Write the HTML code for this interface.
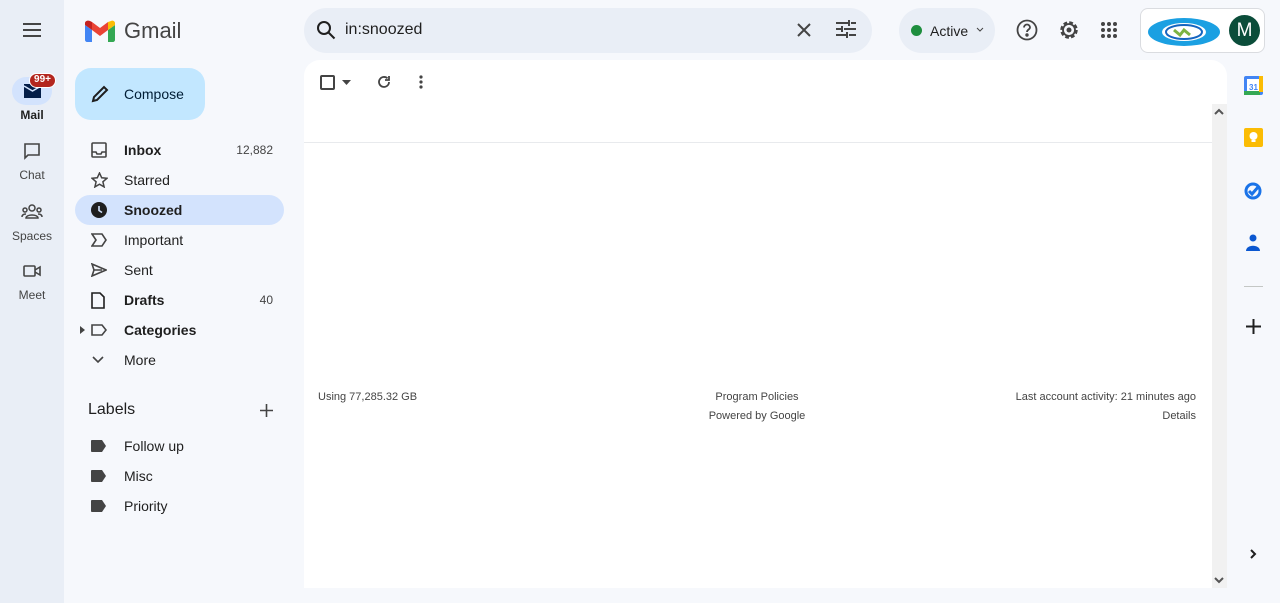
<!DOCTYPE html>
<html><head><meta charset="utf-8"><style>
*{box-sizing:border-box;margin:0;padding:0}
body{width:1280px;height:603px;background:#f6f8fc;font-family:"Liberation Sans",Arial,sans-serif;color:#1f1f1f;position:relative;overflow:hidden}
.rail{position:absolute;left:0;top:0;width:64px;height:603px;background:#e9eef6}
.abs{position:absolute}
.nav{position:absolute;left:75px;width:209px;height:30px;border-radius:15px;font-size:14px;display:flex;align-items:center}
.nav .t{position:absolute;left:49px}
.nav .c{position:absolute;right:11px;font-size:12px;color:#444}
.nav svg{position:absolute;left:16px}
.b{font-weight:bold}
.rl{font-size:12px;color:#444;text-align:center;width:64px;position:absolute;left:0}
.ft{font-size:11px;color:#444;position:absolute;line-height:19px}
</style></head><body>
<div class="rail"></div>
<svg class="abs" style="left:22px;top:21px" width="20" height="18"><path d="M1 3h18M1 9h18M1 15h18" stroke="#444" stroke-width="2"/></svg>
<div class="abs" style="left:12px;top:77px;width:40px;height:28px;border-radius:14px;background:#d3e3fd"></div>
<svg class="abs" style="left:24px;top:84px" width="17" height="14"><path d="M0 0h17v14H0z" fill="#041e49"/><path d="M0 2l8.5 5L17 2" stroke="#d3e3fd" stroke-width="1.5" fill="none"/></svg>
<div class="abs" style="left:29px;top:73px;width:27px;height:15px;border-radius:8px;background:#b3261e;border:1.5px solid #fff;color:#fff;font-size:10px;font-weight:bold;text-align:center;line-height:12px">99+</div>
<div class="rl b" style="top:108px;color:#1f1f1f">Mail</div>
<svg class="abs" style="left:23px;top:142px" width="18" height="18"><path d="M2 2h14v11H5l-3 3z" fill="none" stroke="#444" stroke-width="1.6"/></svg>
<div class="rl" style="top:168px">Chat</div>
<svg class="abs" style="left:21px;top:203px" width="22" height="16" fill="none" stroke="#444" stroke-width="1.5"><circle cx="11" cy="5" r="3"/><circle cx="4" cy="7" r="2"/><circle cx="18" cy="7" r="2"/><path d="M5 15c0-4 12-4 12 0zM1 14c0-3 3-3 4-3M21 14c0-3-3-3-4-3"/></svg>
<div class="rl" style="top:229px">Spaces</div>
<svg class="abs" style="left:23px;top:264px" width="18" height="14" fill="none" stroke="#444" stroke-width="1.6"><rect x="1" y="2" width="11" height="10" rx="1"/><path d="M12 6l5-3v8l-5-3"/></svg>
<div class="rl" style="top:288px">Meet</div>

<svg class="abs" style="left:85px;top:20px" width="30" height="22" viewBox="0 0 30 22"><path d="M2 22h5V10L0 5v15c0 1 1 2 2 2z" fill="#4285f4"/><path d="M23 22h5c1 0 2-1 2-2V5l-7 5z" fill="#34a853"/><path d="M23 2v8l7-5V3c0-2-3-3-4-2z" fill="#fbbc04"/><path d="M7 10V2l8 6 8-6v8l-8 6z" fill="#ea4335"/><path d="M0 3v2l7 5V2L5 1C3 0 0 1 0 3z" fill="#c5221f"/></svg>
<div class="abs" style="left:124px;top:18px;font-size:22px;color:#444">Gmail</div>

<div class="abs" style="left:75px;top:68px;width:130px;height:52px;border-radius:16px;background:#c2e7ff"></div>
<svg class="abs" style="left:90px;top:84px" width="20" height="20"><path d="M3 17l1-4L14 3l3 3L7 16z" fill="none" stroke="#1f1f1f" stroke-width="2"/></svg>
<div class="abs" style="left:124px;top:86px;font-size:14px;color:#001d35">Compose</div>

<div class="nav" style="top:135px"><svg width="16" height="16" fill="none" stroke="#444" stroke-width="1.6"><rect x="1" y="1" width="14" height="14" rx="1"/><path d="M1 10h4l1 2h4l1-2h4"/></svg><span class="t b">Inbox</span><span class="c">12,882</span></div>
<div class="nav" style="top:165px"><svg width="17" height="16" fill="none" stroke="#444" stroke-width="1.5"><path d="M8.5 1l2.2 4.8 5.2.5-4 3.5 1.2 5.1-4.6-2.7-4.6 2.7 1.2-5.1-4-3.5 5.2-.5z"/></svg><span class="t">Starred</span></div>
<div class="nav" style="top:195px;background:#d3e3fd"><svg width="16" height="16"><circle cx="8" cy="8" r="8" fill="#1f1f1f"/><path d="M8 4v4.5l3 2" stroke="#d3e3fd" stroke-width="1.6" fill="none"/></svg><span class="t b">Snoozed</span></div>
<div class="nav" style="top:225px"><svg width="16" height="14" fill="none" stroke="#444" stroke-width="1.6"><path d="M1 1h10l4 6-4 6H1l4-6z"/></svg><span class="t">Important</span></div>
<div class="nav" style="top:255px"><svg width="16" height="14" fill="none" stroke="#444" stroke-width="1.6"><path d="M1 1l14 6-14 6 2-6zM3 7h8"/></svg><span class="t">Sent</span></div>
<div class="nav" style="top:285px"><svg width="14" height="17" fill="none" stroke="#1f1f1f" stroke-width="1.6"><path d="M1 1h8l4 4v11H1z"/></svg><span class="t b">Drafts</span><span class="c">40</span></div>
<div class="nav" style="top:315px"><svg style="left:5px" width="5" height="8"><path d="M0 0l5 4-5 4z" fill="#444"/></svg><svg width="16" height="12" fill="none" stroke="#444" stroke-width="1.6"><path d="M1 1h10l4 5-4 5H1z"/></svg><span class="t b">Categories</span></div>
<div class="nav" style="top:345px"><svg width="14" height="10" fill="none" stroke="#444" stroke-width="1.6"><path d="M2 2l5 5 5-5"/></svg><span class="t">More</span></div>

<div class="abs" style="left:88px;top:401px;font-size:16px">Labels</div>
<svg class="abs" style="left:259px;top:403px" width="15" height="15"><path d="M7.5 1v13M1 7.5h13" stroke="#444" stroke-width="1.6"/></svg>
<div class="nav" style="top:431px"><svg width="16" height="12"><path d="M0 1c0-1 1-1 1-1h10l4 6-4 6H1c-1 0-1-1-1-1z" fill="#444"/></svg><span class="t">Follow up</span></div>
<div class="nav" style="top:461px"><svg width="16" height="12"><path d="M0 1c0-1 1-1 1-1h10l4 6-4 6H1c-1 0-1-1-1-1z" fill="#444"/></svg><span class="t">Misc</span></div>
<div class="nav" style="top:491px"><svg width="16" height="12"><path d="M0 1c0-1 1-1 1-1h10l4 6-4 6H1c-1 0-1-1-1-1z" fill="#444"/></svg><span class="t">Priority</span></div>

<div class="abs" style="left:304px;top:8px;width:568px;height:45px;border-radius:23px;background:#e9eef6"></div>
<svg class="abs" style="left:316px;top:20px" width="20" height="20" fill="none" stroke="#1f1f1f" stroke-width="2"><circle cx="8" cy="8" r="6"/><path d="M12.5 12.5l6 6"/></svg>
<div class="abs" style="left:345px;top:21px;font-size:16px">in:snoozed</div>
<svg class="abs" style="left:796px;top:22px" width="16" height="16"><path d="M2 2l12 12M14 2L2 14" stroke="#444" stroke-width="2"/></svg>
<svg class="abs" style="left:836px;top:20px" width="20" height="18" stroke="#444" stroke-width="2"><path d="M0 3h12M15 3h5M0 9h5M8 9h12M0 15h10M13 15h7M13 0v6M6 6v6M11 12v6"/></svg>

<div class="abs" style="left:899px;top:8px;width:96px;height:45px;border-radius:23px;background:#e9eef6"></div>
<div class="abs" style="left:911px;top:25px;width:11px;height:11px;border-radius:50%;background:#1e8e3e"></div>
<div class="abs" style="left:930px;top:23px;font-size:14px;color:#1f1f1f">Active</div>
<svg class="abs" style="left:976px;top:27px" width="8" height="5"><path d="M1 1l3 3 3-3" stroke="#444" fill="none"/></svg>
<svg class="abs" style="left:1016px;top:19px" width="22" height="22" fill="none" stroke="#444" stroke-width="1.8"><circle cx="11" cy="11" r="9.5"/><path d="M8 8.5a3 3 0 116 0c0 2-3 2-3 4.5"/><circle cx="11" cy="16" r=".8" fill="#444"/></svg>
<svg class="abs" style="left:1058px;top:19px" width="22" height="22"><circle cx="11" cy="11" r="7" fill="none" stroke="#444" stroke-width="3.5" stroke-dasharray="3.5 2"/><circle cx="11" cy="11" r="6" fill="none" stroke="#444" stroke-width="1.8"/><circle cx="11" cy="11" r="2.5" fill="#444"/></svg>
<svg class="abs" style="left:1101px;top:22px" width="16" height="16" fill="#444"><circle cx="2" cy="2" r="2"/><circle cx="8" cy="2" r="2"/><circle cx="14" cy="2" r="2"/><circle cx="2" cy="8" r="2"/><circle cx="8" cy="8" r="2"/><circle cx="14" cy="8" r="2"/><circle cx="2" cy="14" r="2"/><circle cx="8" cy="14" r="2"/><circle cx="14" cy="14" r="2"/></svg>
<div class="abs" style="left:1140px;top:8px;width:125px;height:45px;border-radius:8px;background:#fff;border:1px solid #dadce0"></div>
<svg class="abs" style="left:1147px;top:17px" width="74" height="30"><ellipse cx="37" cy="15" rx="36" ry="14" fill="#1ba0e2"/><ellipse cx="37" cy="15" rx="22" ry="9" fill="#fff"/><ellipse cx="37" cy="15" rx="18" ry="7" fill="none" stroke="#1565c0" stroke-width="2"/><path d="M27 13l6 5 4-5 6 5" stroke="#7cb342" stroke-width="3" fill="none"/></svg>
<div class="abs" style="left:1229px;top:15px;width:31px;height:31px;border-radius:50%;background:#0b4d3a;color:#fff;font-size:19px;text-align:center;line-height:31px">M</div>

<div class="abs" style="left:304px;top:60px;width:923px;height:528px;border-radius:16px 16px 0 0;background:#fff"></div>
<div class="abs" style="left:1212px;top:104px;width:15px;height:484px;background:#f1f1f1"></div>
<svg class="abs" style="left:1214px;top:108px" width="10" height="8"><path d="M1 6l4-4 4 4" stroke="#555" stroke-width="2" fill="none"/></svg>
<svg class="abs" style="left:1214px;top:576px" width="10" height="8"><path d="M1 2l4 4 4-4" stroke="#555" stroke-width="2" fill="none"/></svg>
<div class="abs" style="left:304px;top:142px;width:908px;height:1px;background:#e8eaed"></div>
<div class="abs" style="left:320px;top:75px;width:15px;height:15px;border:2px solid #444;border-radius:2px"></div>
<svg class="abs" style="left:342px;top:80px" width="9" height="5"><path d="M0 0h9L4.5 5z" fill="#444"/></svg>
<svg class="abs" style="left:376px;top:74px" width="16" height="16" fill="none" stroke="#444" stroke-width="1.8"><path d="M13 8a5 5 0 11-1.5-3.6"/><path d="M13 2v4H9" /></svg>
<svg class="abs" style="left:419px;top:75px" width="4" height="14" fill="#444"><circle cx="2" cy="2" r="1.6"/><circle cx="2" cy="7" r="1.6"/><circle cx="2" cy="12" r="1.6"/></svg>

<div class="ft" style="left:318px;top:388px">Using 77,285.32 GB</div>
<div class="ft" style="left:697px;width:120px;text-align:center;top:388px">Program Policies<br>Powered by Google</div>
<div class="ft" style="right:84px;text-align:right;top:388px">Last account activity: 21 minutes ago<br>Details</div>

<svg class="abs" style="left:1244px;top:76px" width="19" height="19"><rect width="19" height="19" rx="2" fill="#4285f4"/><rect x="3" y="3" width="13" height="13" fill="#fff"/><rect x="0" y="15" width="16" height="4" fill="#34a853"/><rect x="15" y="0" width="4" height="16" fill="#fbbc04"/><text x="9.5" y="14" font-size="8" text-anchor="middle" fill="#4285f4" font-family="Liberation Sans" font-weight="bold">31</text></svg>
<svg class="abs" style="left:1244px;top:128px" width="19" height="19"><rect width="19" height="19" rx="2" fill="#fbbc04"/><circle cx="9.5" cy="8" r="4" fill="#fff"/><rect x="7.5" y="12" width="4" height="2" fill="#fff"/></svg>
<svg class="abs" style="left:1244px;top:181px" width="19" height="19"><circle cx="9" cy="10" r="7" fill="none" stroke="#1a73e8" stroke-width="3"/><path d="M5 10l3 3 7-8" stroke="#1a73e8" stroke-width="3" fill="none"/></svg>
<svg class="abs" style="left:1245px;top:234px" width="16" height="18" fill="#0b57d0"><circle cx="8" cy="4" r="3.5"/><path d="M1 17c0-7 14-7 14 0z"/></svg>
<div class="abs" style="left:1244px;top:286px;width:19px;height:1px;background:#c4c7c5"></div>
<svg class="abs" style="left:1246px;top:319px" width="15" height="15"><path d="M7.5 0v15M0 7.5h15" stroke="#1f1f1f" stroke-width="2"/></svg>
<svg class="abs" style="left:1249px;top:548px" width="8" height="12"><path d="M2 2l4 4-4 4" stroke="#1f1f1f" stroke-width="2" fill="none"/></svg>
</body></html>
